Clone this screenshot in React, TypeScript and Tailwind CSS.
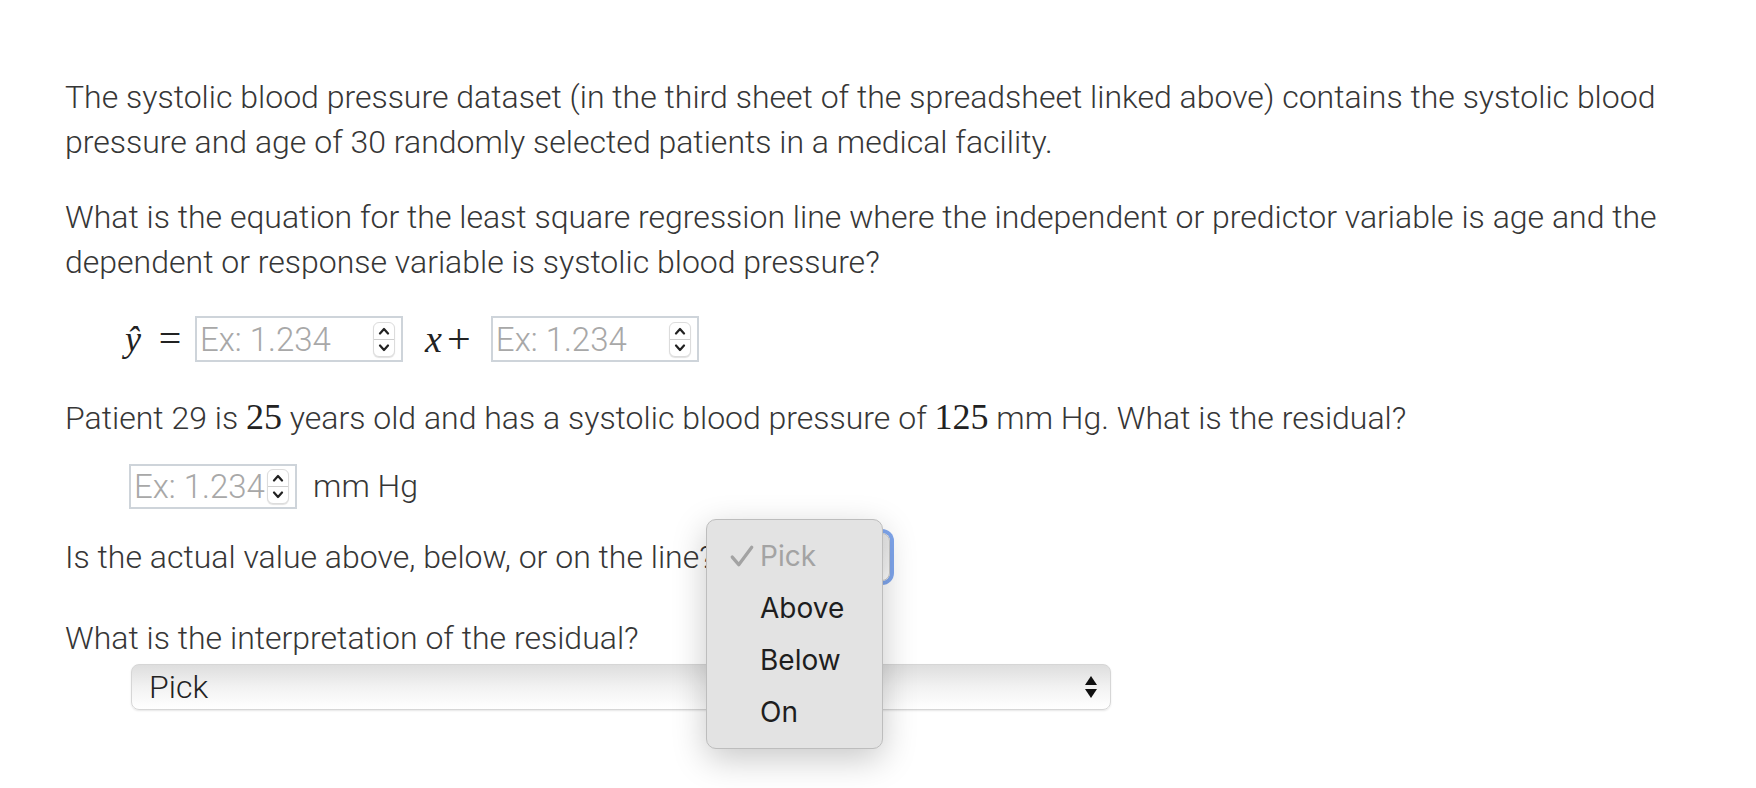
import React from "react";

const math = "font-['Liberation_Serif','Times_New_Roman',serif]";

function Chevron({ up }: { up?: boolean }) {
  return (
    <svg className="h-[8px] w-[12px]" viewBox="0 0 12 8" fill="none" stroke="#222" strokeWidth={2.2} strokeLinecap="round" strokeLinejoin="round">
      <path d={up ? "M2 6.5L6 2l4 4.5" : "M2 1.5L6 6l4-4.5"} />
    </svg>
  );
}

function Spinner() {
  return (
    <div className="flex h-[35px] w-[22px] flex-shrink-0 flex-col overflow-hidden rounded-[6px] border border-[#dcdcdc] bg-white shadow-[0_1px_1px_rgba(0,0,0,0.12)]">
      <div className="flex flex-1 items-center justify-center">
        <Chevron up />
      </div>
      <div className="h-px bg-[#cfcfcf]" />
      <div className="flex flex-1 items-center justify-center">
        <Chevron />
      </div>
    </div>
  );
}

function NumberBox({ className }: { className: string }) {
  return (
    <div className={"flex flex-shrink-0 items-center border-2 border-[#ced4da] bg-white pl-[3px] pr-[6px] " + className}>
      <input
        type="text"
        placeholder="Ex: 1.234"
        className="w-0 min-w-0 flex-1 bg-transparent text-[33px] font-light text-[#333] outline-none placeholder:text-[#a8a8a8]"
      />
      <Spinner />
    </div>
  );
}

function CheckMark() {
  return (
    <svg className="h-[24px] w-[26px]" viewBox="0 0 24 22" fill="none" stroke="#a3a3a3" strokeWidth={3} strokeLinecap="round" strokeLinejoin="round">
      <path d="M3 12l6 7L21 3" />
    </svg>
  );
}

export default function App() {
  const options = ["Pick", "Above", "Below", "On"];

  return (
    <div className="relative min-h-screen w-[1756px] bg-white pl-[65px] pr-[64px] pt-[75px] font-['Roboto_Light','Roboto','Liberation_Sans',sans-serif] text-[32px] font-light leading-[45px] text-[#363636]">
      {/* Question text */}
      <p>
        The systolic blood pressure dataset (in the third sheet of the spreadsheet linked above) contains the systolic blood
        pressure and age of 30 randomly selected patients in a medical facility.
      </p>
      <p className="mt-[30px]">
        What is the equation for the least square regression line where the independent or predictor variable is age and the
        dependent or response variable is systolic blood pressure?
      </p>

      {/* Regression equation */}
      <div className="mt-[31px] flex h-[46px] items-center pl-[60px]">
        <span className={math + " text-[36px] italic leading-none text-[#222]"}>ŷ</span>
        <span className={math + " ml-[14px] inline-block w-[30px] text-center text-[40px] leading-none text-[#222]"}>=</span>
        <NumberBox className="ml-[10px] h-[46px] w-[208px]" />
        <span className={math + " ml-[22px] text-[38px] italic leading-none text-[#222]"}>x</span>
        <span className={math + " ml-[1px] inline-block w-[32px] text-center text-[42px] leading-none text-[#222]"}>+</span>
        <NumberBox className="ml-[16px] h-[46px] w-[208px]" />
      </div>

      {/* Residual */}
      <p className="mt-[33px]">
        Patient 29 is <span className={math + " text-[36px] font-normal text-[#222]"}>25</span> years old and has a systolic blood
        pressure of <span className={math + " text-[36px] font-normal text-[#222]"}>125</span> mm Hg. What is the residual?
      </p>
      <div className="mt-[23px] flex h-[45px] items-center pl-[64px]">
        <NumberBox className="h-[45px] w-[168px]" />
        <span className="ml-[16px]">mm Hg</span>
      </div>

      {/* Above / below */}
      <div className="mt-[22px] flex h-[52px] items-center">
        <span className="whitespace-nowrap">Is the actual value above, below, or on the line?</span>
        <div className="ml-[8px] h-[48px] w-[168px] flex-shrink-0 rounded-[8px] border border-[#c9c9c9] bg-gradient-to-b from-[#e6e6e6] to-white ring-[4px] ring-[#80a7ee]" />
      </div>

      {/* Interpretation */}
      <p className="mt-[33px]">What is the interpretation of the residual?</p>
      <div className="ml-[66px] mt-[3px] flex h-[46px] w-[980px] items-center justify-between rounded-[8px] border border-[#d6d6d6] bg-gradient-to-b from-[#dedede] via-[#f2f2f2] to-white pl-[17px] pr-[12px] shadow-[0_1px_2px_rgba(0,0,0,0.1)]">
        <span className="font-normal text-[#222]">Pick</span>
        <svg className="h-[26px] w-[14px]" viewBox="0 0 14 26" fill="#111">
          <path d="M7 2l6 9H1z" />
          <path d="M7 24l6-9H1z" />
        </svg>
      </div>

      {/* Open select menu */}
      <div className="absolute left-[706px] top-[519px] w-[177px] rounded-[10px] border border-[#bdbdbd] bg-[#e3e3e3] py-[10px] font-['Inter','Liberation_Sans',sans-serif] text-[28px] font-normal shadow-[0_10px_34px_rgba(0,0,0,0.22)]">
        {options.map((o, i) => (
          <div key={o} className="flex h-[52px] items-center">
            <div className="flex w-[53px] justify-end pr-[5px]">{i === 0 && <CheckMark />}</div>
            <span className={i === 0 ? "text-[#a3a3a3]" : "text-[#1e1e1e]"}>{o}</span>
          </div>
        ))}
      </div>
    </div>
  );
}
